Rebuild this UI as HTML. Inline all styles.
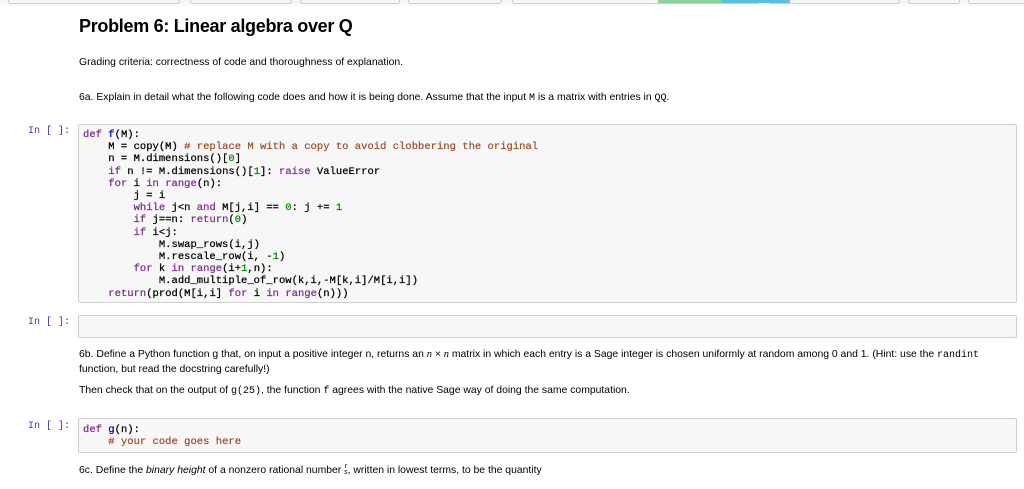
<!DOCTYPE html>
<html><head><meta charset="utf-8"><style>
body{margin:0;width:1024px;height:489px;background:#fff;overflow:hidden;font-family:"Liberation Sans",sans-serif;color:#000;position:relative}
.a{position:absolute}
.tb{top:0;height:3px;border:1px solid #ccc;border-top:none;border-radius:0 0 3px 3px}
.prompt{position:absolute;left:28px;font:10px "Liberation Mono",monospace;color:#303F9F}
.cell{position:absolute;left:78px;width:939px;background:#f7f7f7;border:1px solid #cfcfcf;border-radius:2px;box-sizing:border-box}
pre{margin:0;font:10.5px/12.2px "Liberation Mono",monospace;color:#000;letter-spacing:0.02px;-webkit-text-stroke:0.25px}
.kw{color:#7a2f8a}.c{color:#a0522d}.n{color:#080}.b{color:#00c}
.t{font-size:10.4px;left:79px}
code{font:10px "Liberation Mono",monospace}
</style></head><body>
<div class="a" style="top:0;left:0;width:1024px;height:8px;background:linear-gradient(#f4f4f4,#fff)"></div>
<div class="a tb" style="left:8px;width:170px"></div>
<div class="a tb" style="left:190px;width:100px"></div>
<div class="a tb" style="left:300px;width:98px"></div>
<div class="a tb" style="left:408px;width:92px"></div>
<div class="a tb" style="left:512px;width:246px"></div>
<div class="a tb" style="left:768px;width:130px"></div>
<div class="a tb" style="left:908px;width:50px"></div>
<div class="a tb" style="left:968px;width:418px"></div>
<div class="a" style="top:0;left:658px;width:63px;height:3px;background:#8fd19e"></div>
<div class="a" style="top:0;left:721px;width:69px;height:3px;background:#5bc0de"></div>

<div class="a" style="left:79px;top:16px;font-size:18px;font-weight:bold;letter-spacing:-0.3px">Problem 6: Linear algebra over Q</div>
<div class="a t" style="top:57px">Grading criteria: correctness of code and thoroughness of explanation.</div>
<div class="a t" style="top:92px">6a. Explain in detail what the following code does and how it is being done. Assume that the input <code>M</code> is a matrix with entries in <code>QQ</code>.</div>

<div class="prompt" style="top:126px">In [ ]:</div>
<div class="cell" style="top:124px;height:179px;padding:4px 0 0 4px"><pre><span class="kw">def</span> <span class="b">f</span>(M):
    M = copy(M) <span class="c"># replace M with a copy to avoid clobbering the original</span>
    n = M.dimensions()[<span class="n">0</span>]
    <span class="kw">if</span> n != M.dimensions()[<span class="n">1</span>]: <span class="kw">raise</span> ValueError
    <span class="kw">for</span> i <span class="kw">in</span> <span class="kw">range</span>(n):
        j = i
        <span class="kw">while</span> j&lt;n <span class="kw">and</span> M[j,i] == <span class="n">0</span>: j += <span class="n">1</span>
        <span class="kw">if</span> j==n: <span class="kw">return</span>(<span class="n">0</span>)
        <span class="kw">if</span> i&lt;j:
            M.swap_rows(i,j)
            M.rescale_row(i, -<span class="n">1</span>)
        <span class="kw">for</span> k <span class="kw">in</span> <span class="kw">range</span>(i+<span class="n">1</span>,n):
            M.add_multiple_of_row(k,i,-M[k,i]/M[i,i])
    <span class="kw">return</span>(prod(M[i,i] <span class="kw">for</span> i <span class="kw">in</span> <span class="kw">range</span>(n)))</pre></div>

<div class="prompt" style="top:317px">In [ ]:</div>
<div class="cell" style="top:315px;height:23px"></div>

<div class="a t" style="top:347px;width:935px;line-height:15px">6b. Define a Python function g that, on input a positive integer n, returns an <i style="font-family:'Liberation Serif',serif">n</i> × <i style="font-family:'Liberation Serif',serif">n</i> matrix in which each entry is a Sage integer is chosen uniformly at random among 0 and 1. (Hint: use the <code>randint</code> function, but read the docstring carefully!)</div>
<div class="a t" style="top:385px">Then check that on the output of <code>g(25)</code>, the function <code>f</code> agrees with the native Sage way of doing the same computation.</div>

<div class="prompt" style="top:421px">In [ ]:</div>
<div class="cell" style="top:418px;height:35px;padding:5px 0 0 4px"><pre><span class="kw">def</span> <span class="b">g</span>(n):
    <span class="c"># your code goes here</span></pre></div>

<div class="a t" style="top:464px">6c. Define the <i>binary height</i> of a nonzero rational number <span style="display:inline-block;font-size:7px;font-style:italic;line-height:6px;vertical-align:middle;text-align:center">r<br>s</span>, written in lowest terms, to be the quantity</div>
</body></html>
